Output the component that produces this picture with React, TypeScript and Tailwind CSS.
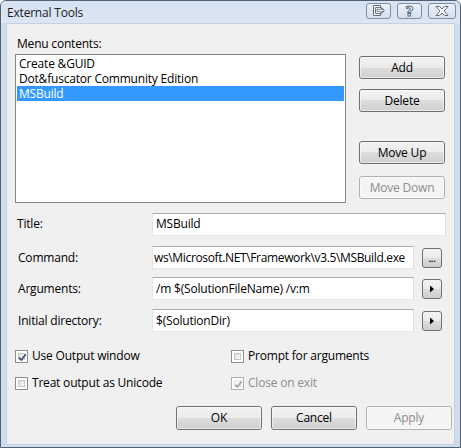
import React from "react";

const font = { fontFamily: '"Open Sans", "Noto Sans", sans-serif', letterSpacing: "-0.2px" };

function Btn({ label, disabled, w = "w-[86px]", h = "h-[23px]" }: { label: string; disabled?: boolean; w?: string; h?: string }) {
  return (
    <div
      className={`${w} ${h} rounded-[3px] border flex items-center justify-center text-[12px] leading-none ${
        disabled
          ? "border-[#adb2b5] bg-[#f4f4f4] text-[#8d8d8d]"
          : "border-[#707070] bg-[linear-gradient(#f2f2f2_0%,#ebebeb_50%,#dddddd_50%,#cfcfcf_100%)] text-black"
      }`}
    >
      <div className="rounded-[2px] w-full h-full flex items-center justify-center border border-[#fcfcfc]/60">{label}</div>
    </div>
  );
}

function SmallBtn({ children }: { children: React.ReactNode }) {
  return (
    <div className="w-[20px] h-[20px] rounded-[3px] border border-[#707070] bg-[linear-gradient(#f2f2f2_0%,#ebebeb_50%,#dddddd_50%,#cfcfcf_100%)] flex items-center justify-center">
      {children}
    </div>
  );
}

function Field({ value, w, tight }: { value: string; w: string; tight?: boolean }) {
  return (
    <div
      className={`${w} h-[23px] bg-white border border-[#e3e9ef] border-t-[#abadb3] border-l-[#e2e3ea] border-r-[#dbdfe6] flex items-center overflow-hidden whitespace-nowrap text-[12px] ${
        tight ? "pl-[1px] tracking-[-0.35px]" : "pl-[3px]"
      }`}
    >
      <span className="shrink-0">{value}</span>
    </div>
  );
}

function Check({ checked, disabled, label }: { checked?: boolean; disabled?: boolean; label: string }) {
  return (
    <div className="flex items-center h-[14px]">
      <div className={`w-[13px] h-[13px] border ${disabled ? "border-[#b1b1b1]" : "border-[#8e8f8f]"} bg-white p-[2px]`}>
        <div
          className={`w-full h-full border ${
            disabled ? "border-[#e6e6e6] bg-[#f4f4f4]" : "border-[#c6c6c6] bg-[linear-gradient(135deg,#dcdcdc,#f8f8f8)]"
          } relative`}
        >
          {checked && (
            <svg className="absolute -left-[2px] -top-[2px]" width="11" height="11" viewBox="0 0 11 11">
              <path d="M2.2 5.6 L4.3 8 L8.8 2.2" fill="none" stroke={disabled ? "#a6a6a6" : "#3d4f74"} strokeWidth="1.7" />
            </svg>
          )}
        </div>
      </div>
      <span className={`ml-[4px] text-[12px] ${disabled ? "text-[#8d8d8d]" : "text-black"}`}>{label}</span>
    </div>
  );
}

function Arrow() {
  return (
    <svg width="6" height="8" viewBox="0 0 6 8">
      <path d="M1 0.5 L5 4 L1 7.5 Z" fill="#000" />
    </svg>
  );
}

function CaptionBtn({ children, w }: { children: React.ReactNode; w: string }) {
  return (
    <div className={`${w} h-[16px] rounded-[3px] border border-[#7d8ea5] bg-[linear-gradient(#e9f0f8,#d6e1ee)] flex items-center justify-center`}>
      {children}
    </div>
  );
}

export default function App() {
  return (
    <div className="w-[461px] h-[448px] bg-white" style={font}>
      <div className="w-[461px] h-[448px] rounded-t-[6px] border border-[#54606f] bg-[#cfdcee] flex flex-col">
        {/* caption */}
        <div className="h-[22px] flex items-center bg-[linear-gradient(#d5e2f1,#dbe6f3)] rounded-t-[5px] pl-[6px] pr-[4px]">
          <span className="text-[12px] text-[#1b1b1b] mt-[1px]">External Tools</span>
          <div className="ml-auto flex items-center gap-[6px] mt-[-3px]">
            <CaptionBtn w="w-[25px]">
              <svg width="13" height="11" viewBox="0 0 13 11">
                <path d="M1.5 0.5 H8.5 V3 H10 L12.5 5.5 L10 8 V8 H8.5 V10.5 H1.5 Z" fill="#fff" stroke="#5d6b80" />
                <path d="M3.5 2.5 H8.5 M3.5 8.5 H8.5 M3.5 2.5 V8.5 M5 4.3 H9.5 V3.6 L11 5.5 L9.5 7.4 V6.7 H5 Z" fill="#fff" stroke="#5d6b80" strokeWidth="0.9" />
              </svg>
            </CaptionBtn>
            <CaptionBtn w="w-[25px]">
              <span className="text-[14px] leading-none font-bold text-white" style={{ WebkitTextStroke: "1px #5d6b80", fontFamily: '"DejaVu Sans", sans-serif' }}>?</span>
            </CaptionBtn>
            <CaptionBtn w="w-[28px]">
              <svg width="14" height="10" viewBox="0 0 14 10">
                <path d="M1 0.5 H4.5 L7 3 L9.5 0.5 H13 L9 5 L13 9.5 H9.5 L7 7 L4.5 9.5 H1 L5 5 Z" fill="#fff" stroke="#5d6b80" strokeLinejoin="round" />
              </svg>
            </CaptionBtn>
          </div>
        </div>

        {/* client */}
        <div className="flex-1 mx-[5px] mb-[2px] mt-[0px] bg-[#f0f0f0] border border-[#c3d1e3] text-[12px] text-black pl-[8px]">
          <div className="flex pt-[12px]">
            <div className="flex flex-col">
              <div className="h-[16px] leading-[16px] pl-[2px]">Menu contents:</div>
              <div className="mt-[2px] w-[331px] h-[149px] bg-white border border-[#828790] pt-[1px] px-[1px]">
                <div className="h-[15px] leading-[15px] pl-[2px]">Create &amp;GUID</div>
                <div className="h-[15px] leading-[15px] pl-[2px]">Dot&amp;fuscator Community Edition</div>
                <div className="h-[15px] leading-[15px] pl-[2px] bg-[#3399ff] text-white">MSBuild</div>
              </div>
            </div>
            <div className="ml-[13px] flex flex-col pt-[20px]">
              <Btn label="Add" />
              <div className="mt-[10px]"><Btn label="Delete" /></div>
              <div className="mt-[29px]"><Btn label="Move Up" /></div>
              <div className="mt-[12px]"><Btn label="Move Down" disabled /></div>
            </div>
          </div>

          {/* fields */}
          <div className="mt-[9px] flex items-center h-[24px]">
            <div className="w-[137px] pl-[2px]">Title:</div>
            <Field value="MSBuild" w="w-[294px]" />
          </div>
          <div className="mt-[10px] flex items-center h-[23px]">
            <div className="w-[137px] pl-[3px]">Command:</div>
            <Field value="ws\Microsoft.NET\Framework\v3.5\MSBuild.exe" w="w-[262px]" tight />
            <div className="ml-[8px]">
              <SmallBtn><span className="text-[9px] leading-none mt-[2px] font-bold">...</span></SmallBtn>
            </div>
          </div>
          <div className="mt-[8px] flex items-center h-[23px]">
            <div className="w-[137px] pl-[3px]">Arguments:</div>
            <Field value="/m $(SolutionFileName) /v:m" w="w-[262px]" />
            <div className="ml-[8px]"><SmallBtn><Arrow /></SmallBtn></div>
          </div>
          <div className="mt-[9px] flex items-center h-[23px]">
            <div className="w-[137px] pl-[3px]">Initial directory:</div>
            <Field value="$(SolutionDir)" w="w-[262px]" />
            <div className="ml-[8px]"><SmallBtn><Arrow /></SmallBtn></div>
          </div>

          {/* options */}
          <div className="mt-[17px] grid grid-cols-[216px_1fr] gap-y-[13px]">
            <Check checked label="Use Output window" />
            <Check label="Prompt for arguments" />
            <Check label="Treat output as Unicode" />
            <Check checked disabled label="Close on exit" />
          </div>

          <div className="mt-[16px] flex gap-[9px] pl-[161px]">
            <Btn label="OK" h="h-[24px]" />
            <Btn label="Cancel" h="h-[24px]" />
            <Btn label="Apply" h="h-[24px]" disabled />
          </div>
        </div>
      </div>
    </div>
  );
}
